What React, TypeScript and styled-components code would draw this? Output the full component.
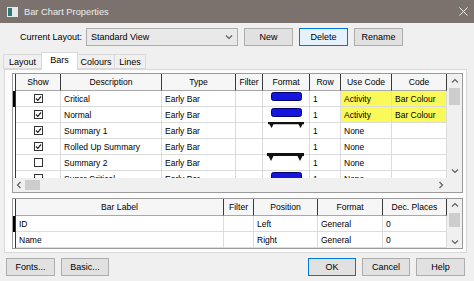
import React from 'react';
import styled, { createGlobalStyle } from 'styled-components';

const GlobalStyle = createGlobalStyle`
  html, body {
    margin: 0;
    padding: 0;
  }
  body {
    background: #f0f0f0;
    font-family: 'Liberation Sans', Arial, sans-serif;
    color: #000;
  }
`;

const Window = styled.div`
  width: 474px;
  height: 281px;
  display: flex;
  flex-direction: column;
  background: #f0f0f0;
  overflow: hidden;
`;

const TitleBar = styled.div`
  height: 23px;
  flex: none;
  display: flex;
  align-items: center;
  padding-left: 7px;
  background: #7b726e;
  color: #eeeeee;
  font-size: 9.3px;
`;

const TitleText = styled.span`
  margin-left: 6px;
`;

const CloseBox = styled.div`
  margin-left: auto;
  width: 22px;
  display: flex;
  justify-content: center;
`;

const LayoutRow = styled.div`
  display: flex;
  align-items: center;
  height: 18px;
  margin-top: 5px;
  padding-left: 20px;
  font-size: 9px;
`;

const FieldLabel = styled.span`
  width: 66px;
`;

const Combo = styled.div`
  width: 152px;
  height: 18px;
  box-sizing: border-box;
  border: 1px solid #adadad;
  background: #e9e9e9;
  display: flex;
  align-items: center;
  justify-content: space-between;
  padding: 0 4px 0 4px;
  font-size: 9px;
`;

const ButtonGroup = styled.div<{ $left?: number }>`
  display: flex;
  gap: 6px;
  margin-left: ${(p) => p.$left ?? 0}px;
`;

const Button = styled.div<{ $w?: number; $default?: boolean; $focus?: boolean }>`
  width: ${(p) => p.$w ?? 48}px;
  height: 18px;
  box-sizing: border-box;
  border: 1px solid ${(p) => (p.$default ? '#0078d7' : '#adadad')};
  background: ${(p) => (p.$focus ? '#e5f1fb' : '#e1e1e1')};
  display: flex;
  align-items: center;
  justify-content: center;
  font-size: 9px;
`;

const TabStrip = styled.div`
  display: flex;
  align-items: flex-end;
  height: 17px;
  margin-top: 6px;
  padding-left: 4px;
  position: relative;
  z-index: 1;
`;

const Tab = styled.div<{ $w: number; $active?: boolean }>`
  width: ${(p) => p.$w}px;
  height: ${(p) => (p.$active ? 18 : 15)}px;
  margin-bottom: ${(p) => (p.$active ? -1 : 0)}px;
  box-sizing: border-box;
  border: 1px solid #d9d9d9;
  border-bottom: ${(p) => (p.$active ? 'none' : '1px solid #d9d9d9')};
  margin-left: -1px;
  background: ${(p) => (p.$active ? '#ffffff' : '#f0f0f0')};
  display: flex;
  align-items: ${(p) => (p.$active ? 'flex-start' : 'center')};
  padding-top: ${(p) => (p.$active ? 2 : 0)}px;
  justify-content: center;
  font-size: 9px;
`;

const Panel = styled.div`
  margin: 0 7px 0 4px;
  height: 184px;
  box-sizing: border-box;
  border: 1px solid #d9d9d9;
  background: #fcfcfc;
  padding: 3px 0 0 7px;
  display: flex;
  flex-direction: column;
  gap: 5px;
`;

const GridFrame = styled.div<{ $rows: string }>`
  width: 451px;
  box-sizing: border-box;
  border: 1px solid #9b9b9b;
  background: #ffffff;
  display: grid;
  grid-template-columns: 434px 15px;
  grid-template-rows: ${(p) => p.$rows};
`;

const GridBody = styled.div`
  overflow: hidden;
`;

const Row = styled.div<{ $cols: string; $h: number }>`
  display: grid;
  grid-template-columns: 3px ${(p) => p.$cols};
  height: ${(p) => p.$h}px;
`;

const Selector = styled.div<{ $active?: boolean }>`
  box-sizing: border-box;
  border-right: 1px solid #333;
  background: ${(p) => (p.$active ? '#000' : '#fff')};
`;

const HeadCell = styled.div`
  box-sizing: border-box;
  border-right: 1px solid #3a3a3a;
  border-bottom: 1px solid #a8a8a8;
  background: #f6f6f6;
  font-size: 8.6px;
  display: flex;
  align-items: center;
  justify-content: center;
  white-space: nowrap;
  overflow: hidden;
`;

const Cell = styled.div<{ $hl?: boolean; $center?: boolean }>`
  box-sizing: border-box;
  border-right: 1px solid #dcdcdc;
  border-bottom: 1px solid #dcdcdc;
  background: ${(p) => (p.$hl ? '#f9f95a' : '#ffffff')};
  font-size: 8.5px;
  padding-left: 3px;
  display: flex;
  align-items: center;
  justify-content: ${(p) => (p.$center ? 'center' : 'flex-start')};
  padding-left: ${(p) => (p.$center ? 0 : 3)}px;
  white-space: nowrap;
  overflow: hidden;
`;

const FormatCell = styled.div`
  box-sizing: border-box;
  border-right: 1px solid #dcdcdc;
  border-bottom: 1px solid #dcdcdc;
  background: #fff;
  overflow: visible;
  position: relative;
`;

const VScroll = styled.div`
  background: #f0f0f0;
  display: flex;
  flex-direction: column;
  align-items: center;
`;

const ArrowBox = styled.div<{ $h: number }>`
  height: ${(p) => p.$h}px;
  width: 100%;
  display: flex;
  align-items: center;
  justify-content: center;
  flex: none;
`;

const VThumb = styled.div<{ $h: number; $top: number }>`
  width: 11px;
  height: ${(p) => p.$h}px;
  margin-top: ${(p) => p.$top}px;
  background: #cdcdcd;
`;

const Spacer = styled.div`
  flex: 1;
`;

const HScroll = styled.div`
  background: #f0f0f0;
  display: flex;
  align-items: center;
`;

const HThumb = styled.div`
  width: 15px;
  height: 10px;
  background: #cdcdcd;
`;

const Corner = styled.div`
  background: #f0f0f0;
`;

const CheckBox = styled.div`
  width: 9px;
  height: 9px;
  box-sizing: border-box;
  border: 1px solid #333;
  background: #fff;
  display: flex;
`;

const BottomRow = styled.div`
  display: flex;
  justify-content: space-between;
  margin-top: 5px;
  padding: 0 9px 0 6px;
`;

const Chevron = ({ dir }: { dir: 'up' | 'down' | 'left' | 'right' }) => {
  const d = {
    up: 'M1 4.5 L4 1.5 L7 4.5',
    down: 'M1 1.5 L4 4.5 L7 1.5',
    left: 'M4.5 1 L1.5 4 L4.5 7',
    right: 'M1.5 1 L4.5 4 L1.5 7',
  }[dir];
  const vertical = dir === 'up' || dir === 'down';
  return (
    <svg width={vertical ? 8 : 6} height={vertical ? 6 : 8}>
      <path d={d} fill="none" stroke="#606060" strokeWidth="1.2" />
    </svg>
  );
};

const Check = ({ on }: { on: boolean }) => (
  <CheckBox>
    {on && (
      <svg width="7" height="7" viewBox="0 0 7 7">
        <path d="M1 3.5 L2.8 5.3 L6 1.5" fill="none" stroke="#222" strokeWidth="1.2" />
      </svg>
    )}
  </CheckBox>
);

type Fmt = 'bar' | 'summary' | 'summaryThick' | 'none';

const FormatGlyph = ({ kind }: { kind: Fmt }) => {
  if (kind === 'none') return null;
  if (kind === 'bar') {
    return (
      <svg width="46" height="15" style={{ position: 'absolute', left: 0, top: 0 }}>
        <rect x="8.5" y="1.5" width="30" height="8" rx="2" fill="#1515e0" stroke="#000070" />
      </svg>
    );
  }
  if (kind === 'summary') {
    return (
      <svg width="46" height="15" style={{ position: 'absolute', left: 0, top: -1 }}>
        <path d="M5 0 H41 V2.2 H39.5 L37.5 6 L35.5 2.2 H10.5 L8.5 6 L6.5 2.2 H5 Z" fill="#111" />
      </svg>
    );
  }
  return (
    <svg width="46" height="15" style={{ position: 'absolute', left: 0, top: -2 }}>
      <path d="M4 0 H41 V3 H39.5 L37 8 L34.5 3 H10.5 L8 8 L5.5 3 H4 Z" fill="#111" />
    </svg>
  );
};

const barCols = [
  { title: 'Show', width: 45 },
  { title: 'Description', width: 101 },
  { title: 'Type', width: 74 },
  { title: 'Filter', width: 27 },
  { title: 'Format', width: 47 },
  { title: 'Row', width: 31 },
  { title: 'Use Code', width: 51 },
  { title: 'Code', width: 55 },
];

const labelCols = [
  { title: 'Bar Label', width: 208 },
  { title: 'Filter', width: 30 },
  { title: 'Position', width: 64 },
  { title: 'Format', width: 65 },
  { title: 'Dec. Places', width: 64 },
];

const bars: {
  show: boolean;
  desc: string;
  fmt: Fmt;
  use: string;
  code: string;
  hl?: boolean;
}[] = [
  { show: true, desc: 'Critical', fmt: 'bar', use: 'Activity', code: 'Bar Colour', hl: true },
  { show: true, desc: 'Normal', fmt: 'bar', use: 'Activity', code: 'Bar Colour', hl: true },
  { show: true, desc: 'Summary 1', fmt: 'summary', use: 'None', code: '' },
  { show: true, desc: 'Rolled Up Summary', fmt: 'none', use: 'None', code: '' },
  { show: false, desc: 'Summary 2', fmt: 'summaryThick', use: 'None', code: '' },
  { show: false, desc: 'Super Critical', fmt: 'bar', use: 'None', code: '' },
];

const labels = [
  { label: 'ID', position: 'Left' },
  { label: 'Name', position: 'Right' },
];

const colTemplate = (cols: { width: number }[]) => cols.map((c) => `${c.width}px`).join(' ');

const HeaderRow = ({ cols }: { cols: { title: string; width: number }[] }) => (
  <Row $cols={colTemplate(cols)} $h={17}>
    <Selector />
    {cols.map((c) => (
      <HeadCell key={c.title}>{c.title}</HeadCell>
    ))}
  </Row>
);

export default function App() {
  const barTpl = colTemplate(barCols);
  const labelTpl = colTemplate(labelCols);

  return (
    <Window>
      <GlobalStyle />
      <TitleBar>
        <svg width="11" height="10">
          <rect x="0" y="0" width="11" height="10" fill="#e6e9e9" />
          <rect x="1" y="1" width="4" height="8" fill="#2f7a78" />
        </svg>
        <TitleText>Bar Chart Properties</TitleText>
        <CloseBox>
          <svg width="9" height="9">
            <path d="M0.5 0.5 L8.5 8.5 M8.5 0.5 L0.5 8.5" stroke="#eeeeee" strokeWidth="1" />
          </svg>
        </CloseBox>
      </TitleBar>

      <LayoutRow>
        <FieldLabel>Current Layout:</FieldLabel>
        <Combo>
          <span>Standard View</span>
          <Chevron dir="down" />
        </Combo>
        <ButtonGroup $left={6}>
          <Button $w={49}>New</Button>
          <Button $w={49} $default $focus>
            Delete
          </Button>
          <Button $w={49}>Rename</Button>
        </ButtonGroup>
      </LayoutRow>

      <TabStrip>
        <Tab $w={39}>Layout</Tab>
        <Tab $w={37} $active>
          Bars
        </Tab>
        <Tab $w={38}>Colours</Tab>
        <Tab $w={32}>Lines</Tab>
      </TabStrip>

      <Panel>
        <GridFrame $rows="104px 14px">
          <GridBody>
            <HeaderRow cols={barCols} />
            {bars.map((b, i) => (
              <Row key={b.desc} $cols={barTpl} $h={16}>
                <Selector $active={i === 0} />
                <Cell $center>
                  <Check on={b.show} />
                </Cell>
                <Cell>{b.desc}</Cell>
                <Cell>Early Bar</Cell>
                <Cell />
                <FormatCell>
                  <FormatGlyph kind={b.fmt} />
                </FormatCell>
                <Cell>1</Cell>
                <Cell $hl={b.hl}>{b.use}</Cell>
                <Cell $hl={b.hl}>{b.code}</Cell>
              </Row>
            ))}
          </GridBody>
          <VScroll>
            <ArrowBox $h={14}>
              <Chevron dir="up" />
            </ArrowBox>
            <VThumb $h={17} $top={0} />
            <Spacer />
            <ArrowBox $h={14}>
              <Chevron dir="down" />
            </ArrowBox>
          </VScroll>
          <HScroll>
            <ArrowBox $h={14} style={{ width: 12 }}>
              <Chevron dir="left" />
            </ArrowBox>
            <HThumb />
            <Spacer />
            <ArrowBox $h={14} style={{ width: 12 }}>
              <Chevron dir="right" />
            </ArrowBox>
          </HScroll>
          <Corner />
        </GridFrame>

        <GridFrame $rows="49px">
          <GridBody>
            <HeaderRow cols={labelCols} />
            {labels.map((l, i) => (
              <Row key={l.label} $cols={labelTpl} $h={16}>
                <Selector $active={i === 0} />
                <Cell>{l.label}</Cell>
                <Cell />
                <Cell>{l.position}</Cell>
                <Cell>General</Cell>
                <Cell>0</Cell>
              </Row>
            ))}
          </GridBody>
          <VScroll>
            <ArrowBox $h={12}>
              <Chevron dir="up" />
            </ArrowBox>
            <VThumb $h={14} $top={2} />
            <Spacer />
            <ArrowBox $h={12}>
              <Chevron dir="down" />
            </ArrowBox>
          </VScroll>
        </GridFrame>
      </Panel>

      <BottomRow>
        <ButtonGroup>
          <Button $w={49}>Fonts...</Button>
          <Button $w={48}>Basic...</Button>
        </ButtonGroup>
        <ButtonGroup>
          <Button $w={48} $default>
            OK
          </Button>
          <Button $w={48}>Cancel</Button>
          <Button $w={49}>Help</Button>
        </ButtonGroup>
      </BottomRow>
    </Window>
  );
}
